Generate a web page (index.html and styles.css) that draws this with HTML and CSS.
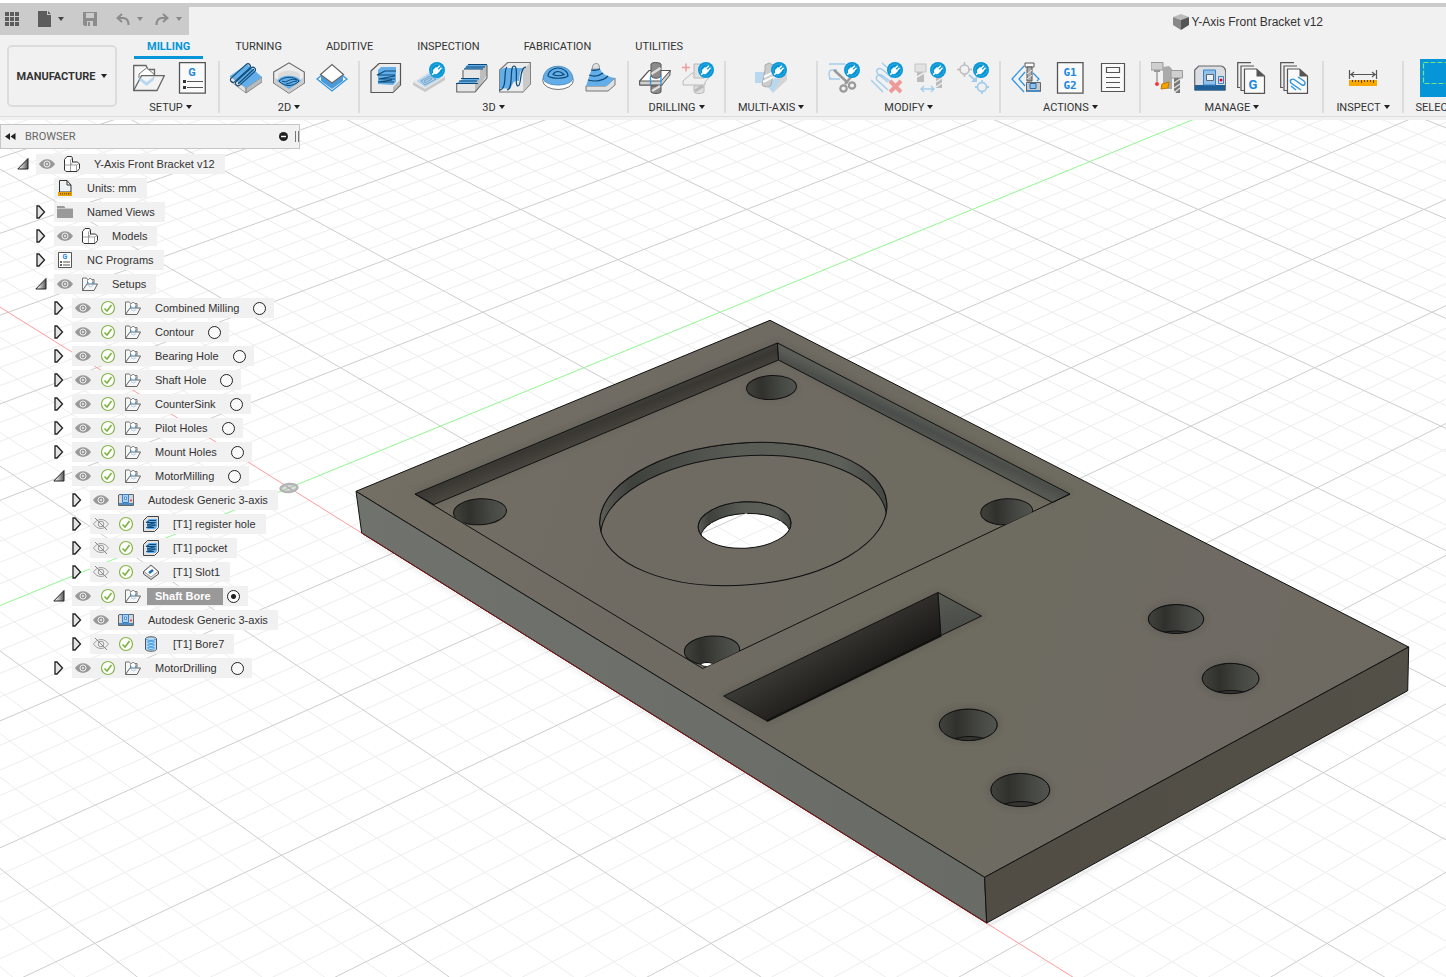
FILE: index.html
```html
<!DOCTYPE html>
<html lang="en">
<head>
<meta charset="utf-8">
<title>Y-Axis Front Bracket v12</title>
<link rel="stylesheet" href="styles.css">
</head>
<body>
<svg class="defs" aria-hidden="true">
  <symbol id="plug" viewBox="0 0 16 16"><circle cx="8" cy="8" r="8" fill="#0696d7"/><circle cx="8" cy="8" r="6" fill="#0696d7" stroke="#fff" stroke-opacity=".35" stroke-width=".5"/><path d="M4.500 7.500L7 5l4 4-2.500 2.500c-1 1-2.500 1-3.500 0s-1.500-3-.5-4z" fill="#fff"/><path d="M3.200 12.800L6 10M8 6.500L10.800 3.700M10 8.500l2.500-2.700" stroke="#fff" stroke-width="1.500"/></symbol>
  <symbol id="eye" viewBox="0 0 16 16"><path d="M0 8c4-6.500 12-6.500 16 0-4 6.500-12 6.500-16 0z" fill="#999"/><circle cx="8" cy="8" r="3" fill="#999" stroke="#eee"/><circle cx="8" cy="8" r="1" fill="#eee"/></symbol>
  <symbol id="eye-off" viewBox="0 0 16 16"><path d="M.5 8c4-6 11-6 15 0-4 6-11 6-15 0z" fill="none" stroke="#a0a0a0"/><circle cx="8" cy="8" r="2.800" fill="none" stroke="#999"/><path d="M2 2l12 12" stroke="#888"/></symbol>
  <symbol id="ok" viewBox="0 0 16 16"><circle cx="8" cy="8" r="6.500" fill="#fff" stroke="#84b547" stroke-width="1.200"/><path d="M4.500 8.500l2.500 2.500 4.500-6" fill="none" stroke="#7cb342" stroke-width="1.600"/></symbol>
  <symbol id="folder" viewBox="0 0 16 16"><path d="M.5 14.500v-12.500h4l1 1.500H12v4" fill="#f6f6f6" stroke="#777"/><path d="M5.500 7.500v-3L8 2l3 2.500v3" fill="#fff" stroke="#888"/><path d="M.5 14.500L5 8h10.500l-3.500 6.500z" fill="#f6f6f6" stroke="#666"/><path d="M5 7.500l1.500-1M11.500 7.500L10 6.500" stroke="#2f97e0" stroke-width="1.500"/><path d="M6 9.500l2.500 1.500L11 9.500" fill="none" stroke="#a8d2f2"/></symbol>
  <symbol id="cubes" viewBox="0 0 16 16"><path d="M.5 14V3.500L3 .5h4.500l1 1.500v4h5L15.500 8v4.500l-2.500 3H2z" fill="#fff" stroke="#333"/><path d="M.5 9h6M6.500 15V4L8.500 2M6.500 9L9 6M6.500 9h6L15 7.500M12.500 9v6" fill="none" stroke="#888" stroke-width=".8"/></symbol>
  <symbol id="units" viewBox="0 0 16 16"><path d="M2.500 12V.5H10L14 5v7z" fill="#eef1f6" stroke="#333"/><path d="M10 .5V5h4" fill="none" stroke="#333"/><path d="M1 12h14v4H1z" fill="#e8a200"/><path d="M3.500 13v1.500M5.500 13v1.500M7.500 13v1.500M9.500 13v1.500M11.500 13v1.500M13 13v1.500" stroke="#6b4800" stroke-width=".8"/></symbol>
  <symbol id="views" viewBox="0 0 16 16"><path d="M0 2h7l1.500 2H16v10H0z" fill="#999"/><path d="M0 4.500h16" stroke="#ddd" stroke-width=".7"/></symbol>
  <symbol id="machine" viewBox="0 0 16 16"><path d="M.5 3L2 2.500h13.500v11H.5z" fill="#d3d6da" stroke="#666"/><path d="M4.500 2.500h6v8h-6z" fill="#a9d0f2" stroke="#3b82c4"/><path d="M6.500 5h2v2.500h-2z" fill="#fff" stroke="#3b82c4" stroke-width=".8"/><path d="M1 11h14v2H1z" fill="#4d8abf"/><circle cx="13" cy="8.500" r="1" fill="#e33"/></symbol>
  <symbol id="pocket" viewBox="0 0 16 16"><path d="M.5 4.500l4-4h11v11l-4 4H.5z" fill="#e2e2e2" stroke="#444"/><path d="M4 5l2-2h8v8l-2 2H4z" fill="#63aee8"/><path d="M13 4.500H6.500L3 6.500h9.500L4 9h8.500L3.500 11.500H11" fill="none" stroke="#0c4775"/></symbol>
  <symbol id="slot" viewBox="0 0 16 16"><path d="M.5 7.500L8 1l7.500 6.500v2.500L8 15.500.5 10z" fill="#ddd" stroke="#555"/><path d="M1 7.500L8 1.500l7 6-7 5.500z" fill="#fff" stroke="#777" stroke-width=".7"/><path d="M6 9L10 6" stroke="#1c6bb0" stroke-width="2.500"/></symbol>
  <symbol id="bore" viewBox="0 0 16 16"><path d="M2.500 2.500C4 .2 12 .2 13.500 2.500v11c-1.500 2.300-9.500 2.300-11 0z" fill="#b5daf7" stroke="#555"/><path d="M3 3c2 2 8 2 10 0M4.500 6c2-1 5-1 7 0-2 2-5 2-7 0zM4.500 9c2-1 5-1 7 0-2 2-5 2-7 0zM4.500 12c2-1 5-1 7 0-2 2-5 2-7 0z" fill="none" stroke="#2f8fdd" stroke-width=".8"/></symbol>
  <symbol id="closed" viewBox="0 0 12 16"><path d="M2 2h2l5.500 6L4 14H2z" fill="#e4e4e4" stroke="#222" stroke-width="1.300"/></symbol>
  <symbol id="open" viewBox="0 0 12 16"><path d="M11 2.500v10.500H.8z" fill="url(#arrowFill)" stroke="#222"/></symbol>
  <linearGradient id="arrowFill" x1="0" x2="1"><stop offset=".2" stop-color="#eee"/><stop offset="1" stop-color="#555"/></linearGradient>
</svg>

<header class="app-header">
  <div class="title-row">
    <div class="quick">
      <button class="q" aria-label="Data panel"><svg width="14" height="14" viewBox="0 0 14 14"><path d="M0 0h4v4H0zM5 0h4v4H5zM10 0h4v4h-4zM0 5h4v4H0zM5 5h4v4H5zM10 5h4v4h-4zM0 10h4v4H0zM5 10h4v4H5zM10 10h4v4h-4z" fill="#5c5c5c"/></svg></button>
      <button class="q file" aria-label="File"><svg width="13" height="16" viewBox="0 0 13 16"><path d="M0 0h9v4h4v12H0zM10 0l3 3h-3z" fill="#5c5c5c"/></svg><i class="caret wide"></i></button>
      <button class="q save" aria-label="Save"><svg width="14" height="14" viewBox="0 0 14 14"><path d="M0 0h14v14H1.500L0 12.500z" fill="#8c8c8c"/><path d="M3 1h8v5H3zM4 9h6v5H4z" fill="#cbcbcb"/><path d="M5 10h2v4H5z" fill="#8c8c8c"/></svg></button>
      <button class="q undo" aria-label="Undo"><svg width="14" height="13" viewBox="0 0 14 13"><path d="M6 1L1.500 5 6 9M2 5h5c4 0 5.500 2 5.500 7" fill="none" stroke="#8c8c8c" stroke-width="2"/></svg><i class="caret wide dim"></i></button>
      <button class="q redo" aria-label="Redo"><svg width="14" height="13" viewBox="0 0 14 13"><path d="M8 1l4.500 4L8 9M12 5H7c-4 0-5.500 2-5.500 7" fill="none" stroke="#8c8c8c" stroke-width="2"/></svg><i class="caret wide dim"></i></button>
    </div>
    <div class="doc-title"><svg width="16" height="16" viewBox="0 0 16 16"><path d="M0 3l8-3 8 3-8 3z" fill="#bbb"/><path d="M0 3l8 3v10l-8-5z" fill="#888"/><path d="M16 3L8 6v10l8-5z" fill="#555"/></svg><span>Y-Axis Front Bracket v12</span></div>
  </div>
  <div class="ribbon">
    <button class="workspace-switch">MANUFACTURE<i class="caret"></i></button>
    <div class="ribbon-main">
      <nav class="tabs">
        <button class="tab active">MILLING</button><button class="tab">TURNING</button><button class="tab">ADDITIVE</button><button class="tab">INSPECTION</button><button class="tab">FABRICATION</button><button class="tab">UTILITIES</button>
      </nav>
      <div class="groups">
        <section class="group">
          <div class="tools">
            <button class="tool" aria-label="New setup"><svg viewBox="0 0 32 32"><path d="M.7 28.500v-25H13l2 4h6.500V13" fill="#f6f6f6" stroke="#666" stroke-width="1.300"/><path d="M6 12l7.500-6 7.500 6v4l-7.500 6L6 16z" fill="#fff" stroke="#777"/><path d="M.7 28.500L8.500 13.700h22.800L24 28.500z" fill="#f3f3f3" fill-opacity=".75" stroke="#666" stroke-width="1.300"/><path d="M6 14.500l7.500 5.500 7.500-5.500V18l-7.500 6L6 18z" fill="#9ccdf5" opacity=".6"/></svg></button>
            <button class="tool" aria-label="NC program"><svg viewBox="0 0 32 32"><path d="M3.500.7h25.800v30.500H3.500z" fill="#fafafa" stroke="#555" stroke-width="1.300"/><text x="16" y="14" class="glyph">G</text><path d="M7 19.500h3M7 25.500h3" stroke="#333" stroke-width="3"/><path d="M11 19.500h16M11 25.500h16" stroke="#555" stroke-width="1.200"/></svg></button>
          </div>
          <button class="group-label">SETUP<i class="caret"></i></button>
        </section>
        <section class="group">
          <div class="tools">
            <button class="tool" aria-label="Face"><svg viewBox="0 0 32 32"><path d="M0 14v5l16 12v-5z" fill="#e4e4e4" stroke="#888" stroke-width=".8"/><path d="M16 26v5l16-11v-5z" fill="#bbb" stroke="#777" stroke-width=".8"/><path d="M0 14L17 2l15 13-16 11z" fill="#63aee8"/><g fill="none" stroke="#0c4775" stroke-width="1.100"><rect x="-2" y="8.500" width="25" height="5" rx="2.500" transform="rotate(-42 10.500 11)"/><rect x="3" y="12" width="25" height="5" rx="2.500" transform="rotate(-42 15.500 14.500)"/><path d="M8 22L24 7"/></g></svg></button>
            <button class="tool" aria-label="2D adaptive clearing"><svg viewBox="0 0 32 32"><path d="M.7 10L16 .8 31.300 10v11L16 31.200.7 21z" fill="#eee" stroke="#666" stroke-width="1.100"/><path d="M1 15l15 11 15-11v6L16 31 1 21z" fill="#cdcdcd"/><path d="M5 18v-5c3-6 19-6 22 0v5l-11 8z" fill="#dcdcdc"/><path d="M4 19c4-7 20-7 24 0l-12 8z" fill="#63aee8"/><path d="M6 19c6-5 14-5 20 0-5 6-15 6-20 0zM9 19c5 3 8-4 15-1M13 22c4 0 6-3 11-3" fill="none" stroke="#0c4775"/></svg></button>
            <button class="tool" aria-label="2D contour"><svg viewBox="0 0 32 32"><path d="M1 17l15-12 15 12-15 12z" fill="none" stroke="#2f97e0" stroke-width="1.300"/><path d="M5 13l11 8 11-8v6l-11 8-11-8z" fill="#4a9bdc"/><path d="M4.500 12.500L16 2.500l11.500 10L16 21z" fill="#fff" stroke="#666" stroke-width="1.200"/></svg></button>
          </div>
          <button class="group-label">2D<i class="caret"></i></button>
        </section>
        <section class="group">
          <div class="tools">
            <button class="tool" aria-label="Pocket clearing"><svg viewBox="0 0 32 32"><path d="M1 9l8-7.500h21.500V23L23 30.500H1z" fill="#ececec" stroke="#555" stroke-width="1.200"/><path d="M23 30v-5l7-7v5z" fill="#bbb"/><path d="M8 8l3-3h15v15l-3 3-15-1z" fill="#63aee8"/><path d="M26 9H15l-8 4h18M25 14L9 17h16M24 20H8l14-2" fill="none" stroke="#0c4775" stroke-width="1.100"/></svg></button>
            <button class="tool" aria-label="Steep and shallow"><svg viewBox="0 0 32 32"><path d="M0 20l12 6v4L0 23zM12 26l20-12v4L12 30z" fill="#c8c8c8"/><path d="M0 20L17 9l15 6-20 12z" fill="#e6e6e6"/><path d="M4 19l13-8 11 5-16 9z" fill="#a9d2f2"/><path d="M8 19l9-5 6 3-11 6zM11 19l6-3 2 1-7 4z" fill="none" stroke="#7aa3c6"/></svg><svg class="badge"><use href="#plug"/></svg></button>
            <button class="tool" aria-label="Flat"><svg viewBox="0 0 32 32"><path d="M.7 21l5-4H7V8l4-5h20v9L20 30H.7z" fill="#e6e6e6"/><path d="M19 30v-9l5-5V8l7-5v10L20 30z" fill="#bdbdbd"/><path d="M.7 22v8H19l12-14V3M7 16V8" fill="none" stroke="#666" stroke-width="1.100"/><path d="M1 21l6-4h17l-5 4zM8 7l3-4h20l-5 4z" fill="#63aee8"/><path d="M0 21.500h22M5 16.500h18M8 7h19M12 2.500h19M3 19h18M10 5h19" stroke="#0c4775"/></svg></button>
            <button class="tool" aria-label="Parallel"><svg viewBox="0 0 32 32"><path d="M.7 8l8-7.500h22.600V22L24 30H.7z" fill="#ececec" stroke="#777" stroke-width="1.200"/><path d="M24 30V8l7-7v21z" fill="#cacaca"/><path d="M1 26V8l4-2h19c-4 4-3 8-4 13-6-2-7 5-9 8z" fill="#63aee8"/><path d="M0 28c9 0 4-21 8-23M8 28c7-1 2-24 7-24s0 20 4 20 1-19 8-19" fill="none" stroke="#0c4775" stroke-width="1.200"/></svg></button>
            <button class="tool" aria-label="Scallop"><svg viewBox="0 0 32 32"><ellipse cx="16" cy="18.500" rx="15.300" ry="9" fill="#fff" stroke="#777"/><path d="M1 17C2 0 30 0 31 17c-4 8-26 8-30 0z" fill="#63aee8" stroke="#5591c0"/><path d="M6 14c0-5 6-8 10-8s10 3 10 8c-4 3-16 3-20 0zM11 12.500c1-2 3-3 5-3s4 1 6 3c-3 1.500-8 1.500-11 0z" fill="none" stroke="#0c4775" stroke-width="1.100"/></svg></button>
            <button class="tool" aria-label="Spiral"><svg viewBox="0 0 32 32"><path d="M1 24h20l9-8v7l-7 6H1z" fill="#e0e0e0" stroke="#777"/><path d="M1 24L8 3c2-2 5-2 6 0 1 9 9 12 16 13l-8 8z" fill="#63aee8"/><path d="M8 3c2-2 5-2 6 0l.5 4H7z" fill="#e0e0e0" stroke="#888" stroke-width=".8"/><path d="M6 8c4 1 7 0 9-1M4 13c5 2 10 1 14-2M3 18c8 2 15 1 20-4" fill="none" stroke="#0c4775" stroke-width="1.200"/></svg></button>
          </div>
          <button class="group-label">3D<i class="caret"></i></button>
        </section>
        <section class="group">
          <div class="tools">
            <button class="tool" aria-label="Drill"><svg viewBox="0 0 32 32"><path d="M.7 19L10 8.500h21.300L23 19v4H.7z" fill="#fff" stroke="#555" stroke-width="1.200"/><path d="M.7 19H22l9-10v4l-8 10H.7z" fill="#d0d0d0" stroke="#555"/><path d="M12 2c1-2 8-2 10 0v12c-2 3-8 3-10 0zM12 24h10v6c-2 2-8 2-10 0z" fill="#8b8b8b" stroke="#555"/><path d="M12.500 12l9-6M13 29l8-5" stroke="#ddd" stroke-width="2.500"/><path d="M11.500 14v9M22 14v9" stroke="#2f97e0" stroke-width="1.300"/></svg></button>
            <button class="tool" aria-label="Hole recognition"><svg viewBox="0 0 32 32"><g opacity=".45"><path d="M1 19l9-8h21l-8 9v3H1z" fill="#eee" stroke="#777"/><path d="M12 2h10v14H12zM12 24h10v6c-2 2-8 2-10 0z" fill="#ccc" stroke="#777"/><path d="M13 29l8-5" stroke="#777" stroke-width="3"/><path d="M0 5.500h8M4 1.500v8" stroke="#e33" stroke-width="1.500"/></g></svg><svg class="badge"><use href="#plug"/></svg></button>
          </div>
          <button class="group-label">DRILLING<i class="caret"></i></button>
        </section>
        <section class="group">
          <div class="tools">
            <button class="tool" aria-label="Multi-axis"><svg viewBox="0 0 32 32"><path d="M0 10h12v11H0z" fill="#b8d8f0"/><path d="M22 14l10-2v6L18 31l4-9z" fill="#d4d4d4"/><path d="M12 24l8-8 5 2-7 13z" fill="#b8d8f0"/><path d="M10 3l4-2 6 3-1 5-3 14c-2 3-7 2-9 0l3-15z" fill="#ccc" stroke="#aaa"/><path d="M8 20l10-5M9 15l10-5" stroke="#fff" stroke-width="2"/></svg><svg class="badge"><use href="#plug"/></svg></button>
          </div>
          <button class="group-label">MULTI-AXIS<i class="caret"></i></button>
        </section>
        <section class="group">
          <div class="tools">
            <button class="tool" aria-label="Trim toolpath"><svg viewBox="0 0 32 32"><path d="M1 2h16M12 17H4c-4-1-4-9 0-9h5M1 17h9" fill="none" stroke="#a4cdec" stroke-width="1.400"/><path d="M6 8l14 13M24 14l-7 8" stroke="#999" stroke-width="2.500"/><circle cx="15.500" cy="26.500" r="3.200" fill="none" stroke="#999" stroke-width="2.200"/><circle cx="24" cy="23.500" r="3.200" fill="none" stroke="#999" stroke-width="2.200"/></svg><svg class="badge"><use href="#plug"/></svg></button>
            <button class="tool" aria-label="Delete passes"><svg viewBox="0 0 32 32"><path d="M11 1l7 6M17 20L8 13C3 9 7 4 12 8l9 8M0 18l12 12M17 28L6 18c-2-3 1-7 6-4l8 6" fill="none" stroke="#a4cdec" stroke-width="1.500"/><path d="M19 19l11 11M30 19L19 30" stroke="#ef9a9a" stroke-width="4"/></svg><svg class="badge"><use href="#plug"/></svg></button>
            <button class="tool" aria-label="Replace tool"><svg viewBox="0 0 32 32"><path d="M3 10h7v10H3zM22 14h6v12h-6z" fill="#bbb"/><path d="M1 2h11v8H1z" fill="#e2e2e2" stroke="#c4c4c4"/><path d="M3 15l7-4M22 20l6-4M22 25l6-4" stroke="#eee" stroke-width="1.500"/><path d="M7 27h13M10 24l-3 3 3 3M17 24l3 3-3 3" fill="none" stroke="#a4cdec" stroke-width="1.300"/></svg><svg class="badge"><use href="#plug"/></svg></button>
            <button class="tool" aria-label="Move entry"><svg viewBox="0 0 32 32"><circle cx="7.500" cy="7.500" r="4.500" fill="none" stroke="#bbb" stroke-width="1.500"/><path d="M7.500 0v3M7.500 12v3M0 7.500h3M12 7.500h3" stroke="#bbb" stroke-width="1.500"/><circle cx="25" cy="25" r="4.500" fill="none" stroke="#a4cdec" stroke-width="1.800"/><path d="M25 18v3M25 29v3M18 25h3M29 25h3M12 13l6 5" stroke="#a4cdec" stroke-width="1.800"/><path d="M20 14v6h-6z" fill="#a4cdec"/></svg><svg class="badge"><use href="#plug"/></svg></button>
          </div>
          <button class="group-label">MODIFY<i class="caret"></i></button>
        </section>
        <section class="group">
          <div class="tools">
            <button class="tool" aria-label="Simulate"><svg viewBox="0 0 32 32"><path d="M13 4L1 17l12 13M14 10l-6 7 6 7M22 11l6 6-2 2" fill="none" stroke="#2f97e0" stroke-width="1.300"/><path d="M14 1h9v4h-9z" fill="#fff" stroke="#555"/><path d="M16 5h5v14h-5z" fill="#aaa" stroke="#555"/><path d="M16 12l5-4M16 17l5-4" stroke="#eee"/><path d="M15.500 20.500h14v9h-14z" fill="#c6c9ce" stroke="#666"/><path d="M19 21.500h6v5h-6z" fill="#8fc1ee" stroke="#2a6cab"/><path d="M16 28h13v2H16z" fill="#4d8abf"/></svg></button>
            <button class="tool" aria-label="Post process"><svg viewBox="0 0 32 32"><path d="M3.500.7h25.500v30.500H3.500z" fill="#fafafa" stroke="#555" stroke-width="1.300"/><text x="16" y="14" class="glyph mono">G1</text><text x="16" y="27" class="glyph mono">G2</text></svg></button>
            <button class="tool" aria-label="Setup sheet"><svg viewBox="0 0 32 32"><path d="M4.500 1.500h23v28h-23z" fill="#fafafa" stroke="#555" stroke-width="1.200"/><path d="M9.500 5.500h13v5h-13zM9 15.500h14M9 20.500h14M9 25.500h14" fill="none" stroke="#555" stroke-width="1.200"/></svg></button>
          </div>
          <button class="group-label">ACTIONS<i class="caret"></i></button>
        </section>
        <section class="group">
          <div class="tools">
            <button class="tool" aria-label="Tool library"><svg viewBox="0 0 32 32"><path d="M0 .5h12V8H0z" fill="#cfcfcf" stroke="#999"/><path d="M3 8h6v2H3z" fill="#999"/><path d="M6 10v10" stroke="#777"/><circle cx="6" cy="22" r="2" fill="#f33"/><path d="M12 5l6-1 3 3v20h-4l-5-5z" fill="#aaa"/><path d="M11 22l7-2-1 6-7 1z" fill="#f5a300" stroke="#c47a00"/><path d="M20 8.500h11.500V16H20z" fill="#cfcfcf" stroke="#999"/><path d="M23 16h6v15h-4l-2-3z" fill="#777"/><path d="M23 21l6-4M23 26l6-4M24 30l5-4" stroke="#ddd" stroke-width="1.500"/></svg></button>
            <button class="tool" aria-label="Machine library"><svg viewBox="0 0 32 32"><path d="M.7 28V8l4-4h22c3 0 5 3 5 6v18z" fill="#dadde2" stroke="#666" stroke-width="1.200"/><path d="M1 23h30v5.500H1z" fill="#1f5f97"/><path d="M9.500 8h12v15h-12z" fill="#8fc1ee" stroke="#3b82c4"/><path d="M12.500 12.500h7v6h-7z" fill="#e8f3fc" stroke="#666"/><path d="M24.500 14.500h5v7h-5z" fill="#cfe3f5" stroke="#3b82c4"/><circle cx="27" cy="18" r="1.500" fill="#e02"/></svg></button>
            <button class="tool" aria-label="Post library"><svg viewBox="0 0 32 32"><path d="M3 25.500H.7V.7H14M7 28.500H4V4h13" fill="none" stroke="#555" stroke-width="1.200"/><path d="M7.500 7h12l8 7v17.300h-20z" fill="#fafafa" stroke="#555" stroke-width="1.200"/><path d="M19.500 7v7.500h8z" fill="#555"/><text x="16" y="27" class="glyph big">G</text></svg></button>
            <button class="tool" aria-label="Template library"><svg viewBox="0 0 32 32"><path d="M3 25.500H.7V.7H14M7 28.500H4V4h13" fill="none" stroke="#555" stroke-width="1.200"/><path d="M7.500 7h12l8 7v17.300h-20z" fill="#fafafa" stroke="#555" stroke-width="1.200"/><path d="M19.500 7v7.500h8z" fill="#555"/><path d="M16 28l-5-4M21 28l-10-7c-2-3 1-5 4-3l7 5c3 1 4-2 2-4l-6-4" fill="none" stroke="#2f97e0" stroke-width="1.400"/></svg></button>
          </div>
          <button class="group-label">MANAGE<i class="caret"></i></button>
        </section>
        <section class="group">
          <div class="tools"><button class="tool" aria-label="Measure"><svg viewBox="0 0 32 32"><path d="M2.500 8v9M29.500 8v9M3 12.500h26M7 10l-3 2.500L7 15M25 10l3 2.500-3 2.500" fill="none" stroke="#555" stroke-width="1.200"/><path d="M2 18h28v6H2z" fill="#f9a800"/><path d="M5.500 18v2M8.500 18v2M11.500 18v2M14.500 18v3M17.500 18v2M20.500 18v2M23.500 18v2M26.500 18v3" stroke="#5f4300"/></svg></button></div>
          <button class="group-label">INSPECT<i class="caret"></i></button>
        </section>
        <section class="group">
          <div class="tools"><button class="tool select-tool" aria-label="Select"><svg viewBox="0 0 38 38"><path d="M3.500 3.500h31v21h-31z" fill="none" stroke="#7fe08a" stroke-width="1.200" stroke-dasharray="5 2"/></svg></button></div>
          <button class="group-label">SELECT<i class="caret"></i></button>
        </section>
      </div>
    </div>
  </div>
</header>

<main class="workspace">
  <svg class="scene" viewBox="0 120 1446 857" preserveAspectRatio="xMinYMin slice" role="img" aria-label="Bracket model">
    <defs>
      <linearGradient id="top" x1="356" y1="400" x2="1400" y2="760" gradientUnits="userSpaceOnUse"><stop offset="0" stop-color="#736f64"/><stop offset=".3" stop-color="#6f6b63"/><stop offset=".6" stop-color="#6e6b60"/><stop offset=".8" stop-color="#6f6b64"/><stop offset="1" stop-color="#6d695f"/></linearGradient>
      <linearGradient id="side"><stop offset="0" stop-color="#70736d"/><stop offset="1" stop-color="#696b66"/></linearGradient>
      <linearGradient id="front"><stop offset="0" stop-color="#514d45"/><stop offset="1" stop-color="#535047"/></linearGradient>
      <linearGradient id="wallL" x1="580" y1="415" x2="590" y2="440" gradientUnits="userSpaceOnUse"><stop offset="0" stop-color="#48463f"/><stop offset=".5" stop-color="#393732"/><stop offset="1" stop-color="#48453f"/></linearGradient>
      <linearGradient id="wallR" x1="930" y1="420" x2="922" y2="437" gradientUnits="userSpaceOnUse"><stop offset="0" stop-color="#5a5c56"/><stop offset=".5" stop-color="#4a4d49"/><stop offset="1" stop-color="#565852"/></linearGradient>
      <linearGradient id="hole"><stop offset="0" stop-color="#42423d"/><stop offset=".3" stop-color="#30302c"/><stop offset=".7" stop-color="#464844"/><stop offset="1" stop-color="#52544f"/></linearGradient>
      <linearGradient id="ring"><stop offset="0" stop-color="#5e5e58"/><stop offset=".12" stop-color="#3f413d"/><stop offset=".5" stop-color="#595b55"/><stop offset=".85" stop-color="#5d5f59"/><stop offset="1" stop-color="#454743"/></linearGradient>
      <linearGradient id="slotWall" x1="820" y1="640" x2="850" y2="690" gradientUnits="userSpaceOnUse"><stop offset="0" stop-color="#3b3934"/><stop offset="1" stop-color="#191816"/></linearGradient>
      <linearGradient id="slotEnd" x1="0" y1="0" x2=".2" y2="1"><stop offset="0" stop-color="#595b55"/><stop offset="1" stop-color="#484a46"/></linearGradient>
      <clipPath id="floorClip"><path d="M434 504.500L778.500 360l274 142.500-350 166z"/></clipPath>
      <clipPath id="ringClip"><ellipse cx="743.300" cy="514" rx="144" ry="71" transform="rotate(-4.400 743.300 514)"/></clipPath>
      <clipPath id="boreClip"><ellipse cx="744.600" cy="525" rx="46.600" ry="23.200" transform="rotate(-3 744.600 525)"/></clipPath>
      <clipPath id="throughClip"><ellipse cx="745.500" cy="536.500" rx="45" ry="23" transform="rotate(-3 745.500 536.500)"/></clipPath>
      <clipPath id="h1"><ellipse cx="1176" cy="619" rx="27.700" ry="14.500"/></clipPath>
      <clipPath id="h2"><ellipse cx="1230.600" cy="678.500" rx="28.400" ry="15.200"/></clipPath>
      <clipPath id="h3"><ellipse cx="968.300" cy="724.800" rx="29" ry="15.800"/></clipPath>
      <clipPath id="h4"><ellipse cx="1020.300" cy="790" rx="29.500" ry="16.600"/></clipPath>
      <filter id="soft" x="-10%" y="-10%" width="120%" height="120%"><feGaussianBlur stdDeviation="3"/></filter>
    </defs>
    <g id="grid"><path id="minor" class="minor"/><path id="major" class="major"/><path id="axisX" class="axis-x"/><path id="axisY" class="axis-y"/></g>
    <ellipse cx="289" cy="488" rx="8.500" ry="4" transform="rotate(-6 289 488)" fill="#ddd" stroke="#b4b4b4" stroke-width="2.500"/><path d="M283 490.500l12-5" stroke="#9c9"/><path d="M286 486l6 4" stroke="#aaa" stroke-width="1.500"/>
    <path d="M362 534L987 924l421-232" fill="none" stroke="#000" opacity=".14" stroke-width="3" filter="url(#soft)"/>
    <g class="edges">
      <path d="M356 491.300L770 320.300l638.700 326.700L984.600 877.300z" fill="url(#top)"/>
      <path d="M356 491.300l628.600 386 2.100 45.700-625-390z" fill="url(#side)"/>
      <path d="M984.600 877.300L1408.700 647l-1 43.700L986.700 923z" fill="url(#front)"/>
      <path d="M361.700 533l625 390" class="base"/>
      <g class="occlusion" filter="url(#soft)"><path d="M415 494l362.500-151L1070 494M434 504.500L778.500 360l274 142.500M723.700 696L938 592.500l43.500 23.500L767 721z"/><ellipse cx="1176" cy="619" rx="28" ry="15"/><ellipse cx="1230" cy="678" rx="29" ry="16"/><ellipse cx="968" cy="724" rx="30" ry="16"/><ellipse cx="1020" cy="790" rx="30" ry="17"/><ellipse cx="771.500" cy="387.500" rx="25" ry="12"/><ellipse cx="744.600" cy="525" rx="47" ry="24"/></g>
      <path d="M434 504.500L778.500 360l274 142.500-350 166z" fill="url(#top)" opacity=".35" stroke="none"/>
      <path d="M415 494l362.500-151 1 17L434 504.500z" fill="url(#wallL)"/>
      <path d="M777.500 343L1070 494l-17.500 8.500L778.500 360z" fill="url(#wallR)"/>
      <path d="M415 494l287.700 174.500L1070 494" fill="none"/>
      <ellipse cx="771.500" cy="387.500" rx="25" ry="12" fill="url(#hole)" transform="rotate(-3 771.500 387.500)"/>
      <g clip-path="url(#floorClip)">
        <ellipse cx="480" cy="511.800" rx="26.500" ry="13" fill="url(#hole)" transform="rotate(-3 480 511.800)"/>
        <ellipse cx="1006.700" cy="511.800" rx="26" ry="13" fill="url(#hole)" transform="rotate(-3 1006.700 511.800)"/>
        <ellipse cx="712" cy="650.500" rx="27.700" ry="14.500" fill="url(#hole)" transform="rotate(-3 712 650.500)"/>
        <ellipse cx="707" cy="664.500" rx="6" ry="2" fill="#fff"/>
      </g>
      <g clip-path="url(#ringClip)"><ellipse cx="743.300" cy="514" rx="144" ry="71" transform="rotate(-4.400 743.300 514)" fill="url(#ring)"/><ellipse cx="743.700" cy="527" rx="143.300" ry="71" transform="rotate(-4.400 743.700 527)" fill="url(#top)"/></g>
      <ellipse cx="743.300" cy="514" rx="144" ry="71" transform="rotate(-4.400 743.300 514)" fill="none"/>
      <g clip-path="url(#boreClip)"><ellipse cx="744.600" cy="525" rx="46.600" ry="23.200" transform="rotate(-3 744.600 525)" fill="url(#ring)"/><ellipse cx="745.500" cy="536.500" rx="45" ry="23" transform="rotate(-3 745.500 536.500)" fill="#fff"/><g clip-path="url(#throughClip)"><use href="#grid"/></g></g>
      <ellipse cx="744.600" cy="525" rx="46.600" ry="23.200" transform="rotate(-3 744.600 525)" fill="none"/>
      <path d="M723.700 696L938 592.500l3 43L767 721z" fill="url(#slotWall)"/>
      <path d="M938 592.500l43.500 23.500-40.500 19.500z" fill="url(#slotEnd)"/>
      <path d="M941 635.500L767 721" stroke-width="2"/>
      <g clip-path="url(#h1)"><ellipse cx="1176" cy="619" rx="27.700" ry="14.500" fill="url(#hole)"/><ellipse cx="1176" cy="644" rx="27" ry="13" fill="#33332f"/></g>
      <g clip-path="url(#h2)"><ellipse cx="1230.600" cy="678.500" rx="28.400" ry="15.200" fill="url(#hole)"/><ellipse cx="1230.600" cy="703.500" rx="28" ry="13" fill="#33332f"/></g>
      <g clip-path="url(#h3)"><ellipse cx="968.300" cy="724.800" rx="29" ry="15.800" fill="url(#hole)"/><ellipse cx="970" cy="750.500" rx="28" ry="14" fill="#33332f"/></g>
      <g clip-path="url(#h4)"><ellipse cx="1020.300" cy="790" rx="29.500" ry="16.600" fill="url(#hole)"/><ellipse cx="1021" cy="816.500" rx="29" ry="15" fill="#33332f"/></g>
      <g fill="none"><ellipse cx="1176" cy="619" rx="27.700" ry="14.500"/><ellipse cx="1230.600" cy="678.500" rx="28.400" ry="15.200"/><ellipse cx="968.300" cy="724.800" rx="29" ry="15.800"/><ellipse cx="1020.300" cy="790" rx="29.500" ry="16.600"/></g>
    </g>
  </svg>

  <aside class="browser">
    <div class="browser-head"><button class="collapse" aria-label="Collapse"><svg width="11" height="7" viewBox="0 0 11 7"><path d="M5 0v7L0 3.500zM10.500 0v7l-5-3.500z" fill="#222"/></svg></button><h2>BROWSER</h2><button class="pin" aria-label="Hide panel"><svg width="9" height="9" viewBox="0 0 9 9"><circle cx="4.500" cy="4.500" r="4.500" fill="#222"/><path d="M2 4.500h5" stroke="#fff" stroke-width="1.400"/></svg></button><span class="grip"></span></div>
    <ul class="tree">
      <li class="row l0"><button class="arrow" aria-label="Collapse"><svg><use href="#open"/></svg></button><div class="chip"><svg><use href="#eye"/></svg><svg><use href="#cubes"/></svg><span class="label">Y-Axis Front Bracket v12</span></div></li>
      <li class="row l1"><span class="arrow"></span><div class="chip"><svg><use href="#units"/></svg><span class="label">Units: mm</span></div></li>
      <li class="row l1"><button class="arrow" aria-label="Expand"><svg><use href="#closed"/></svg></button><div class="chip"><svg><use href="#views"/></svg><span class="label">Named Views</span></div></li>
      <li class="row l1"><button class="arrow" aria-label="Expand"><svg><use href="#closed"/></svg></button><div class="chip"><svg><use href="#eye"/></svg><svg><use href="#cubes"/></svg><span class="label">Models</span></div></li>
      <li class="row l1"><button class="arrow" aria-label="Expand"><svg><use href="#closed"/></svg></button><div class="chip"><svg viewBox="0 0 16 16"><path d="M1.500.5h13v15h-13z" fill="#fff" stroke="#555"/><text x="8" y="7" class="glyph small">G</text><path d="M3 10h2M3 13h2" stroke="#333" stroke-width="1.500"/><path d="M6 10h7M6 13h7" stroke="#555"/></svg><span class="label">NC Programs</span></div></li>
      <li class="row l1"><button class="arrow" aria-label="Collapse"><svg><use href="#open"/></svg></button><div class="chip"><svg><use href="#eye"/></svg><svg><use href="#folder"/></svg><span class="label">Setups</span></div></li>
      <li class="row l2"><button class="arrow" aria-label="Expand"><svg><use href="#closed"/></svg></button><div class="chip"><svg><use href="#eye"/></svg><svg><use href="#ok"/></svg><svg><use href="#folder"/></svg><label class="label" for="s1">Combined Milling</label><input type="radio" name="setup" id="s1"></div></li>
      <li class="row l2"><button class="arrow" aria-label="Expand"><svg><use href="#closed"/></svg></button><div class="chip"><svg><use href="#eye"/></svg><svg><use href="#ok"/></svg><svg><use href="#folder"/></svg><label class="label" for="s2">Contour</label><input type="radio" name="setup" id="s2"></div></li>
      <li class="row l2"><button class="arrow" aria-label="Expand"><svg><use href="#closed"/></svg></button><div class="chip"><svg><use href="#eye"/></svg><svg><use href="#ok"/></svg><svg><use href="#folder"/></svg><label class="label" for="s3">Bearing Hole</label><input type="radio" name="setup" id="s3"></div></li>
      <li class="row l2"><button class="arrow" aria-label="Expand"><svg><use href="#closed"/></svg></button><div class="chip"><svg><use href="#eye"/></svg><svg><use href="#ok"/></svg><svg><use href="#folder"/></svg><label class="label" for="s4">Shaft Hole</label><input type="radio" name="setup" id="s4"></div></li>
      <li class="row l2"><button class="arrow" aria-label="Expand"><svg><use href="#closed"/></svg></button><div class="chip"><svg><use href="#eye"/></svg><svg><use href="#ok"/></svg><svg><use href="#folder"/></svg><label class="label" for="s5">CounterSink</label><input type="radio" name="setup" id="s5"></div></li>
      <li class="row l2"><button class="arrow" aria-label="Expand"><svg><use href="#closed"/></svg></button><div class="chip"><svg><use href="#eye"/></svg><svg><use href="#ok"/></svg><svg><use href="#folder"/></svg><label class="label" for="s6">Pilot Holes</label><input type="radio" name="setup" id="s6"></div></li>
      <li class="row l2"><button class="arrow" aria-label="Expand"><svg><use href="#closed"/></svg></button><div class="chip"><svg><use href="#eye"/></svg><svg><use href="#ok"/></svg><svg><use href="#folder"/></svg><label class="label" for="s7">Mount Holes</label><input type="radio" name="setup" id="s7"></div></li>
      <li class="row l2"><button class="arrow" aria-label="Collapse"><svg><use href="#open"/></svg></button><div class="chip"><svg><use href="#eye"/></svg><svg><use href="#ok"/></svg><svg><use href="#folder"/></svg><label class="label" for="s8">MotorMilling</label><input type="radio" name="setup" id="s8"></div></li>
      <li class="row l3"><button class="arrow" aria-label="Expand"><svg><use href="#closed"/></svg></button><div class="chip"><svg><use href="#eye"/></svg><svg><use href="#machine"/></svg><span class="label">Autodesk Generic 3-axis</span></div></li>
      <li class="row l3"><button class="arrow" aria-label="Expand"><svg><use href="#closed"/></svg></button><div class="chip"><svg><use href="#eye-off"/></svg><svg><use href="#ok"/></svg><svg><use href="#pocket"/></svg><span class="label">[T1] register hole</span></div></li>
      <li class="row l3"><button class="arrow" aria-label="Expand"><svg><use href="#closed"/></svg></button><div class="chip"><svg><use href="#eye-off"/></svg><svg><use href="#ok"/></svg><svg><use href="#pocket"/></svg><span class="label">[T1] pocket</span></div></li>
      <li class="row l3"><button class="arrow" aria-label="Expand"><svg><use href="#closed"/></svg></button><div class="chip"><svg><use href="#eye-off"/></svg><svg><use href="#ok"/></svg><svg><use href="#slot"/></svg><span class="label">[T1] Slot1</span></div></li>
      <li class="row l2"><button class="arrow" aria-label="Collapse"><svg><use href="#open"/></svg></button><div class="chip"><svg><use href="#eye"/></svg><svg><use href="#ok"/></svg><svg><use href="#folder"/></svg><label class="label selected" for="s9">Shaft Bore</label><input type="radio" name="setup" id="s9" checked></div></li>
      <li class="row l3"><button class="arrow" aria-label="Expand"><svg><use href="#closed"/></svg></button><div class="chip"><svg><use href="#eye"/></svg><svg><use href="#machine"/></svg><span class="label">Autodesk Generic 3-axis</span></div></li>
      <li class="row l3"><button class="arrow" aria-label="Expand"><svg><use href="#closed"/></svg></button><div class="chip"><svg><use href="#eye-off"/></svg><svg><use href="#ok"/></svg><svg><use href="#bore"/></svg><span class="label">[T1] Bore7</span></div></li>
      <li class="row l2"><button class="arrow" aria-label="Expand"><svg><use href="#closed"/></svg></button><div class="chip"><svg><use href="#eye"/></svg><svg><use href="#ok"/></svg><svg><use href="#folder"/></svg><label class="label" for="s10">MotorDrilling</label><input type="radio" name="setup" id="s10"></div></li>
    </ul>
  </aside>
</main>
<script src="grid.js"></script>
</body>
</html>
```
FILE: styles.css
```css
* { box-sizing: border-box; }
body { margin: 0; min-height: 100vh; display: flex; flex-direction: column; font: 11px/16px Roboto, "Liberation Sans", sans-serif; color: #333; overflow-x: hidden; background: #fff; }
button { border: 0; background: none; padding: 0; margin: 0; font: inherit; color: inherit; }
svg { display: block; flex: none; }
.defs { width: 0; height: 0; position: absolute; }
.glyph { font: bold 11px Roboto, sans-serif; fill: #1a88e0; text-anchor: middle; }
.glyph.small { font-size: 7px; }
.glyph.big { font-size: 13px; }
.glyph.mono { font: bold 11px "DejaVu Sans Mono", monospace; }

.app-header { background: #f1f1f1; border-top: 3px solid #fff; padding-bottom: 3px; overflow: hidden; }
.title-row { display: flex; height: 32px; }
.quick { flex: none; width: 189px; background: #cbcbcb; display: flex; align-items: center; padding-left: 5px; }
.q { display: flex; align-items: center; gap: 7px; }
.q.file { margin-left: 19px; }
.q.save { margin-left: 19px; }
.q.undo { margin-left: 19px; }
.q.redo { margin-left: 12px; }
.caret { display: inline-block; border: 3px solid transparent; border-top: 4px solid #222; border-bottom: 0; margin-left: 3px; vertical-align: 2px; }
.caret.wide { border-width: 4px 3px 0; border-top-color: #444; margin-left: 0; }
.caret.dim { border-top-color: #888; }
.doc-title { flex: 1; border-top: 4px solid #cbcbcb; display: flex; align-items: center; justify-content: flex-end; gap: 2px; padding: 2px 123px 0 0; font: 12px/16px "Liberation Sans", Arial, sans-serif; }

.ribbon { display: flex; gap: 6px; border-bottom: 1px solid #dcdcdc; }
.workspace-switch { flex: none; width: 110px; height: 62px; margin: 10px 0 0 7px; padding-top: 1px; border: 2px solid #dcdcdc; border-radius: 5px; font-weight: bold; }
.workspace-switch .caret { margin-left: 6px; }
.ribbon-main { flex: none; }
.tabs { display: flex; gap: 20px; padding-left: 11px; height: 24px; }
.tab { padding: 0 12px; border-bottom: 3px solid transparent; height: 24px; line-height: 22px; padding-top: 1px; }
.tab.active { color: #0696d7; border-color: #0696d7; font-weight: bold; padding: 1px 13px 0; }
.groups { display: flex; padding: 2px 0 3px; }
.group { border-right: 2px solid #dcdcdc; padding-top: 1px; display: flex; flex-direction: column; align-items: center; height: 52px; }
.group:last-child { border-right: 0; }
.tools { display: flex; gap: 11px; padding: 0 10px; }
.tool { position: relative; width: 32px; height: 32px; }
.tool > svg { width: 32px; height: 32px; }
.tool > .badge { position: absolute; top: 0; right: 0; width: 16px; height: 16px; }
.select-tool { width: 38px; height: 38px; margin: -3px 0; background: #0696d7; }
.select-tool > svg { width: 38px; height: 38px; }
.group-label { padding: 0 12px; margin-top: 6px; height: 16px; white-space: nowrap; }

.workspace { position: relative; flex: 1; min-height: 857px; overflow: hidden; }
.scene { position: absolute; inset: 0; width: 100%; height: 100%; }
.minor { fill: none; stroke: #ededed; }
.major { fill: none; stroke: #cdcdcd; }
.axis-x { fill: none; stroke: #ff9c9c; }
.axis-y { fill: none; stroke: #90f790; }
.edges { stroke: #111; stroke-linejoin: round; }
.edges .base { stroke: #7c1414; }
.occlusion { stroke: #222; stroke-width: 3px; fill: none; opacity: .25; }

.browser { position: relative; width: 300px; padding-top: 4px; }
.browser-head { display: flex; align-items: center; height: 25px; border: 1px solid #c6c6c6; background: #f1f1f1; padding-left: 4px; }
.browser-head h2 { flex: 1; margin: 0 0 0 9px; font: 11px/16px Roboto, sans-serif; color: #666; }
.grip { width: 4px; height: 11px; margin: 0 0 0 7px; border: solid #777; border-width: 0 1px; }
.tree { list-style: none; margin: 3px 0 0; padding: 0; font: 11px/16px "Liberation Sans", Arial, sans-serif; }
.row { display: flex; align-items: center; height: 24px; }
.l0 { padding-left: 16px; }
.l1 { padding-left: 34px; }
.l2 { padding-left: 52px; }
.l3 { padding-left: 70px; }
.arrow { flex: none; width: 20px; height: 16px; padding-left: 1px; }
.arrow svg { width: 12px; height: 16px; }
.chip { display: flex; align-items: center; height: 20px; background: #f1f1f1; padding-left: 3px; gap: 9px; white-space: nowrap; }
.chip svg { width: 16px; height: 16px; }
.label { margin-left: -3px; padding: 0 10px 0 8px; }
.selected { background: #999; color: #fff; font-weight: bold; padding-right: 12px; line-height: 17px; }
.chip input { appearance: none; width: 13px; height: 13px; margin: 0 8px 0 -5px; border: 1px solid #222; border-radius: 50%; background: #fafafa; }
.chip input:checked { background: radial-gradient(circle, #222 0 2px, #fff 3px); }
```
FILE: grid.js
```js
// Ground plane in perspective: i runs along the red axis, j along the green one.
const HORIZON = -1805;
const VANISH_X = 1267.5;

function project(i, j) {
  const row = 6 + i - j;
  const depth = 1 / (5.0847e-4 - row * 1.2052e-5);
  const x = VANISH_X + 0.11208 * depth * (-3.807 + 0.5 * (i + j));
  return x.toFixed(1) + ' ' + (depth + HORIZON).toFixed(1);
}

const NEAR = 14;
const FAR = -2;
const alongI = j => `M${project(FAR - 6 + j, j)}L${project(NEAR - 6 + j, j)}`;
const alongJ = i => `M${project(i, i + 6 - FAR)}L${project(i, i + 6 - NEAR)}`;

let minor = '';
let major = '';
for (let k = -50; k <= 60; k++) {
  if (k === 0) continue;
  const lines = alongI(k / 5) + alongJ(k / 5);
  if (k % 5 === 0) major += lines;
  else minor += lines;
}
document.getElementById('minor').setAttribute('d', minor);
document.getElementById('major').setAttribute('d', major);
document.getElementById('axisX').setAttribute('d', alongI(0));
document.getElementById('axisY').setAttribute('d', alongJ(0));
```
